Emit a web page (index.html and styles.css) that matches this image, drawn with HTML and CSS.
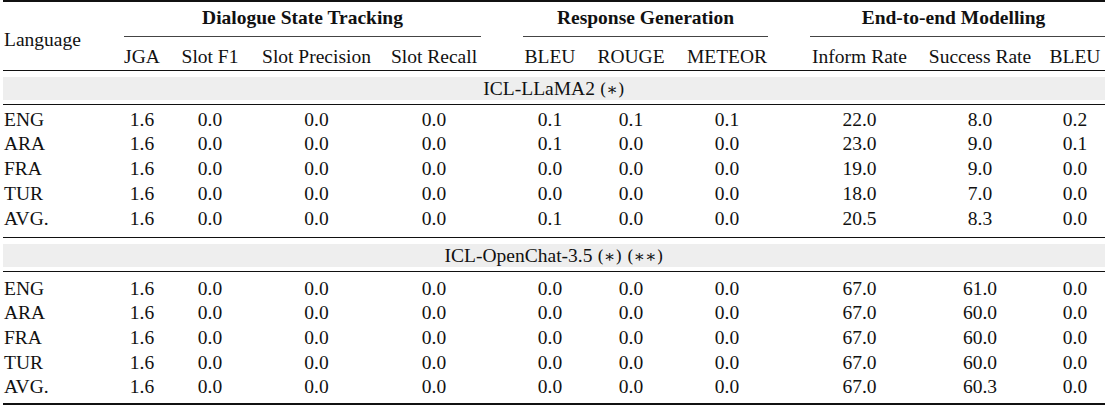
FILE: index.html
```html
<!DOCTYPE html>
<html lang="en">
<head>
<meta charset="utf-8">
<title>Results table</title>
<link rel="stylesheet" href="styles.css">
</head>
<body>
<div class="tbl">
  <div class="head">
    <div class="lang-h">Language</div>
    <div class="grp grp-dst">Dialogue State Tracking</div>
    <div class="grp grp-rg">Response Generation</div>
    <div class="grp grp-e2e">End-to-end Modelling</div>
    <div class="sub">JGA</div>
    <div class="sub">Slot F1</div>
    <div class="sub">Slot Precision</div>
    <div class="sub sub-gap">Slot Recall</div>
    <div class="sub">BLEU</div>
    <div class="sub">ROUGE</div>
    <div class="sub sub-gap2">METEOR</div>
    <div class="sub">Inform Rate</div>
    <div class="sub">Success Rate</div>
    <div class="sub">BLEU</div>
  </div>

  <div class="band">ICL-LLaMA2 <span class="m">(∗)</span></div>
  <div class="block block-1">
    <div class="row"><div>ENG</div><div>1.6</div><div>0.0</div><div>0.0</div><div>0.0</div><div>0.1</div><div>0.1</div><div>0.1</div><div>22.0</div><div>8.0</div><div>0.2</div></div>
    <div class="row"><div>ARA</div><div>1.6</div><div>0.0</div><div>0.0</div><div>0.0</div><div>0.1</div><div>0.0</div><div>0.0</div><div>23.0</div><div>9.0</div><div>0.1</div></div>
    <div class="row"><div>FRA</div><div>1.6</div><div>0.0</div><div>0.0</div><div>0.0</div><div>0.0</div><div>0.0</div><div>0.0</div><div>19.0</div><div>9.0</div><div>0.0</div></div>
    <div class="row"><div>TUR</div><div>1.6</div><div>0.0</div><div>0.0</div><div>0.0</div><div>0.0</div><div>0.0</div><div>0.0</div><div>18.0</div><div>7.0</div><div>0.0</div></div>
    <div class="row"><div>AVG.</div><div>1.6</div><div>0.0</div><div>0.0</div><div>0.0</div><div>0.1</div><div>0.0</div><div>0.0</div><div>20.5</div><div>8.3</div><div>0.0</div></div>
  </div>

  <div class="band">ICL-OpenChat-3.5 <span class="m">(∗)</span> <span class="m">(∗∗)</span></div>
  <div class="block block-2">
    <div class="row"><div>ENG</div><div>1.6</div><div>0.0</div><div>0.0</div><div>0.0</div><div>0.0</div><div>0.0</div><div>0.0</div><div>67.0</div><div>61.0</div><div>0.0</div></div>
    <div class="row"><div>ARA</div><div>1.6</div><div>0.0</div><div>0.0</div><div>0.0</div><div>0.0</div><div>0.0</div><div>0.0</div><div>67.0</div><div>60.0</div><div>0.0</div></div>
    <div class="row"><div>FRA</div><div>1.6</div><div>0.0</div><div>0.0</div><div>0.0</div><div>0.0</div><div>0.0</div><div>0.0</div><div>67.0</div><div>60.0</div><div>0.0</div></div>
    <div class="row"><div>TUR</div><div>1.6</div><div>0.0</div><div>0.0</div><div>0.0</div><div>0.0</div><div>0.0</div><div>0.0</div><div>67.0</div><div>60.0</div><div>0.0</div></div>
    <div class="row"><div>AVG.</div><div>1.6</div><div>0.0</div><div>0.0</div><div>0.0</div><div>0.0</div><div>0.0</div><div>0.0</div><div>67.0</div><div>60.3</div><div>0.0</div></div>
  </div>
</div>
</body>
</html>
```

FILE: styles.css
```css
html, body {
  margin: 0;
  padding: 0;
  background: #ffffff;
}

body {
  font-family: "Liberation Serif", "Times New Roman", "DejaVu Serif", serif;
  font-size: 19.5px;
  line-height: 24.7px;
  color: #111111;
}

.tbl {
  width: 1102px;
  margin-left: 3px;
  border-top: 2px solid #111111;
  border-bottom: 2px solid #111111;
}

.head,
.row {
  display: grid;
  grid-template-columns: 113px 52px 84px 129px 133px 72px 90px 128px 111px 130px 60px;
}

.head {
  grid-template-rows: auto auto;
  border-bottom: 1px solid #111111;
}

.lang-h {
  grid-row: 1 / 3;
  grid-column: 1;
  padding-top: 25.8px;
  padding-left: 1px;
  white-space: nowrap;
}

.grp {
  font-weight: bold;
  text-align: center;
  white-space: nowrap;
  padding-top: 4px;
  padding-bottom: 5.3px;
  border-bottom: 1px solid #444444;
}

.grp-dst {
  grid-column: span 4;
  margin-left: 8px;
  margin-right: 33px;
}

.grp-rg {
  grid-column: span 3;
  margin-left: 9px;
  margin-right: 36px;
}

.grp-e2e {
  grid-column: span 3;
  margin-left: 6px;
  padding-right: 8px;
}

.sub {
  text-align: center;
  white-space: nowrap;
  padding-top: 8px;
}

.sub-gap {
  padding-right: 27px;
}

.sub-gap2 {
  padding-right: 26px;
}

.band {
  margin-top: 6px;
  margin-bottom: 4px;
  height: 23px;
  line-height: 23px;
  background: #eeeeee;
  text-align: center;
  white-space: nowrap;
}

.m {
  font-family: "DejaVu Serif", "Liberation Serif", serif;
  font-size: 17px;
}

.block {
  border-top: 1px solid #111111;
}

.block-1 {
  padding-top: 3px;
  padding-bottom: 5.4px;
  border-bottom: 1px solid #111111;
}

.block-2 {
  padding-top: 5px;
  padding-bottom: 3px;
}

.row > div {
  text-align: center;
  white-space: nowrap;
}

.row > div:first-child {
  text-align: left;
  padding-left: 1px;
}

.row > div:nth-child(5) {
  padding-right: 27px;
}

.row > div:nth-child(8) {
  padding-right: 26px;
}
```
